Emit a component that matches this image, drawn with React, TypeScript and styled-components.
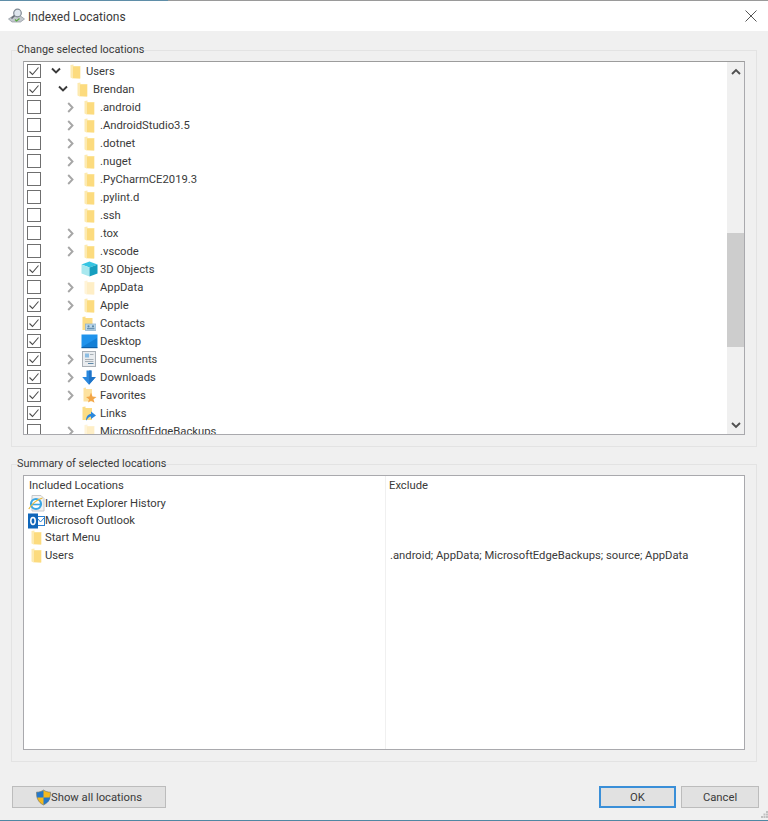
import React from "react";
import styled, { createGlobalStyle } from "styled-components";

const Global = createGlobalStyle`
  html, body { margin: 0; padding: 0; background: #f0f0f0; }
  * { box-sizing: border-box; }
`;

const Window = styled.div`
  position: relative;
  width: 768px; height: 821px; display: flex; flex-direction: column;
  background: #f0f0f0; color: #3a3a3a;
  font-family: Roboto, "Noto Sans", sans-serif; font-size: 11.25px;
  border-bottom: 1px solid #4f87a3; overflow: hidden;
`;
const TopEdge = styled.div`
  height: 1px; flex: none;
  background: linear-gradient(90deg, #5f8ea8 0 168px, #9a9a9a 168px);
`;
const TitleBar = styled.div`
  height: 30px; flex: none; background: #fff; display: flex; align-items: center;
  padding: 0 11px 0 8px; gap: 3px; font-size: 12px; color: #3a3a3a;
`;
const Title = styled.span`flex: 1; padding-top: 1px;`;
const Content = styled.div`
  flex: 1; display: flex; flex-direction: column; padding: 11px 11px 0 11px;
`;
const Group = styled.fieldset<{ $h: number }>`
  margin: 0; padding: 0 11px 11px 11px; height: ${p => p.$h}px; min-width: 0;
  border: 1px solid #e3e3e3; display: block;
`;
const Legend = styled.legend`
  margin-left: -6px; padding: 0; font-size: 10.85px; line-height: 16px; color: #3a3a3a;
`;
const TreeBox = styled.div`
  height: 374px; margin-top: 3px; border: 1px solid #a9a9ad; background: #fff;
  border-top-color: #9c9c9c; display: flex; overflow: hidden;
`;
const TreeList = styled.div`flex: 1; overflow: hidden; min-width: 0;`;
const Row = styled.div`
  height: 18px; display: flex; align-items: center; padding-left: 3px; white-space: nowrap;
`;
const Check = styled.span`
  width: 14px; height: 14px; flex: none; border: 1px solid #6f6f6f; background: #fff;
  display: flex; align-items: center; justify-content: center;
`;
const Indent = styled.span<{ $level: number }>`
  flex: none; width: ${p => p.$level * 7 + 8}px;
`;
const Caret = styled.span`
  flex: none; width: 14px; height: 14px; display: flex; align-items: center; justify-content: center;
`;
const IconSlot = styled.span`
  flex: none; width: 20px; height: 18px; display: flex; align-items: center; justify-content: center; margin-left: 2px;
`;
const RowLabel = styled.span`margin-left: 1px;`;
const Scrollbar = styled.div`
  width: 17px; flex: none; background: #f0f0f0; display: flex; flex-direction: column; align-items: stretch;
`;
const Arrow = styled.div`
  height: 17px; flex: none; display: flex; align-items: center; justify-content: center;
`;
const ArrowTop = styled(Arrow)`margin-top: 1px;`;
const Track = styled.div`flex: 1; padding-top: 153px;`;
const Thumb = styled.div`height: 114px; background: #cdcdcd;`;

const SummaryBox = styled.div`
  height: 275px; margin-top: 3px; border: 1px solid #a9a9ad; background: #fff;
  display: grid; grid-template-columns: 362px 1fr;
`;
const Column = styled.div`
  display: flex; flex-direction: column; min-width: 0;
  &:first-child { border-right: 1px solid #f0f0f0; }
`;
const ColHead = styled.div<{ $pad: number }>`
  height: 18.6px; padding-left: ${p => p.$pad}px; display: flex; align-items: center;
`;
const SumRow = styled.div`
  height: 17.3px; display: flex; align-items: center; white-space: nowrap;
`;
const SumIcon = styled.span`
  flex: none; width: 17px; height: 17px; margin-left: 4px; display: flex; align-items: center; justify-content: center;
`;
const ExcludeText = styled.span`padding-left: 4px;`;

const Spacer = styled.div`height: 9px; flex: none;`;
const Footer = styled.div`
  flex: 1; display: flex; align-items: flex-start; padding: 24px 0 0 1px; margin-right: -2px; gap: 5px;
`;
const Button = styled.button<{ $w: number; $primary?: boolean }>`
  width: ${p => p.$w}px; height: 22px; padding: 0; margin: 0; font: inherit; color: #3a3a3a;
  background: #e1e1e1; border: ${p => p.$primary ? "2px solid #3a8fd8" : "1px solid #bcbcbc"};
  display: flex; align-items: center; justify-content: center;
`;
const Push = styled.div`flex: 1;`;
const Grip = styled.svg`position: absolute; right: 0; bottom: 2px;`;

const Folder = ({ pale }: { pale?: boolean }) => (
  <svg width="11" height="15" viewBox="0 0 11 15">
    <path d="M0.5 1 L3.5 0.5 L3.5 2 L10.5 2 L10.5 14.5 L2.5 14.5 L0.5 13.5Z" fill={pale ? "#fff4d8" : "#fdeab0"} />
    <path d="M3 2.5 L10 2.5 L10 14.5 L3 14Z" fill={pale ? "#feeec6" : "#fcdb7e"} />
  </svg>
);
const Cube = () => (
  <svg width="17" height="16" viewBox="0 0 17 16">
    <path d="M8.5 0.5 L16.5 3.5 L8.5 6.5 L0.5 3.5Z" fill="#35c4e2" />
    <path d="M0.5 3.5 L8.5 6.5 L8.5 15.5 L0.5 12.5Z" fill="#a8e8ef" />
    <path d="M8.5 6.5 L16.5 3.5 L16.5 12.5 L8.5 15.5Z" fill="#159ebf" />
  </svg>
);
const Contacts = () => (
  <svg width="14" height="15" viewBox="0 0 14 15">
    <path d="M0.5 1 L3.5 0.5 L3.5 2 L10.5 2 L10.5 14 L0.5 14Z" fill="#fbdc84" />
    <rect x="3.5" y="8" width="10.5" height="6.5" fill="#bcd8ea" stroke="#8ab0cc" strokeWidth="0.7" />
    <circle cx="6.5" cy="10.3" r="1.1" fill="#5c87a8" />
    <circle cx="11" cy="10.3" r="1.1" fill="#5c87a8" />
    <rect x="5" y="11.8" width="7.5" height="1.5" fill="#6a94b4" />
  </svg>
);
const Desktop = () => (
  <svg width="17" height="15" viewBox="0 0 17 15">
    <rect x="0.5" y="0.5" width="16" height="13" fill="#1f93ec" />
    <path d="M1 13 L16 4 L16 13Z" fill="#137fd6" />
    <rect x="0.5" y="13" width="16" height="1.2" fill="#0b5ea8" />
  </svg>
);
const Doc = () => (
  <svg width="14" height="16" viewBox="0 0 14 16">
    <rect x="0.5" y="0.5" width="13" height="15" fill="#e9ecef" stroke="#aab0b6" />
    <rect x="3" y="2.5" width="4" height="4" fill="#8dbde2" />
    <rect x="8" y="3" width="3.5" height="1" fill="#a8b0b6" />
    <rect x="3" y="8" width="8.5" height="1" fill="#a8b0b6" />
    <rect x="3" y="10" width="8.5" height="1" fill="#a8b0b6" />
    <rect x="6" y="12" width="5.5" height="1" fill="#5c87a8" />
  </svg>
);
const Down = () => (
  <svg width="14" height="15" viewBox="0 0 14 15">
    <path d="M4.5 0.5 H9.5 V7 H13.8 L7 14.8 L0.2 7 H4.5Z" fill="#2a88de" />
    <path d="M7 0.5 H9.5 V7 H13.8 L7 14.8Z" fill="#1f74c8" />
  </svg>
);
const Favorites = () => (
  <svg width="15" height="16" viewBox="0 0 15 16">
    <path d="M1.5 1 L4 0.5 L4 2 L10 2 L10 14.5 L1.5 14.5Z" fill="#fde2a0" />
    <path d="M9 5.5 L10.5 9.5 L14.5 10 L11.5 12.3 L12.5 15.8 L9 13.8 L6 15.5 L7 12.3 L4 10 L7.5 9.5Z" fill="#f2a649" />
  </svg>
);
const Links = () => (
  <svg width="14" height="15" viewBox="0 0 14 15">
    <path d="M0.5 1 L3.5 0.5 L3.5 2 L10 2 L10 14 L0.5 14Z" fill="#fbdc84" />
    <path d="M4 14.8 C4 10.5 6.2 8 9 8 L9 5.5 L14 9.5 L9 13 L9 10.5 C7.5 10.5 5.8 12 4 14.8Z" fill="#2b88dc" />
  </svg>
);
const IE = () => (
  <svg width="17" height="17" viewBox="0 0 17 17">
    <path d="M4 0.5 H13 L16 3.5 V16 H4Z" fill="#f1f2f3" stroke="#c6c8cb" />
    <circle cx="8" cy="9" r="5" fill="#fff" stroke="#3aa6e4" strokeWidth="2.2" />
    <path d="M3.5 9.5 H13" stroke="#3aa6e4" strokeWidth="1.6" />
    <path d="M0.8 14 C3 10 9 4 14.5 3" fill="none" stroke="#e6b93a" strokeWidth="1.2" />
  </svg>
);
const Outlook = () => (
  <svg width="17" height="16" viewBox="0 0 17 16">
    <rect x="8.5" y="3.5" width="8" height="9" fill="#fff" stroke="#2a7fd0" strokeWidth="1" />
    <path d="M9.5 5.5 L12.5 9 L16 5" fill="none" stroke="#2a7fd0" strokeWidth="1" />
    <rect x="0" y="0.5" width="10" height="15" fill="#0f66ba" />
    <ellipse cx="5" cy="8" rx="2.2" ry="3.4" fill="none" stroke="#fff" strokeWidth="1.5" />
  </svg>
);
const Shield = () => (
  <svg width="15" height="17" viewBox="0 0 16 17">
    <path d="M8 0.5 C10 2 12.5 2.8 15.5 2.8 C15.5 9 14 13.5 8 16.5 C2 13.5 0.5 9 0.5 2.8 C3.5 2.8 6 2 8 0.5Z" fill="#f4b91e" stroke="#5e6d80" strokeWidth="0.6" />
    <path d="M8 1 V8.5 H1 C0.8 7 0.8 5 0.8 3 C3.5 3 6 2.2 8 1Z" fill="#2577c9" />
    <path d="M8 8.5 H15 C14.6 11.8 12.5 14.5 8 16.2Z" fill="#2577c9" />
  </svg>
);
const Indexed = () => (
  <svg width="17" height="16" viewBox="0 0 17 16">
    <path d="M0.5 11 L5 8 H12.5 L16.5 11 L12.5 14 H4Z" fill="#c3c8ce" stroke="#8d949c" strokeWidth="0.7" />
    <circle cx="9.5" cy="5" r="3.8" fill="#dfe6ee" stroke="#808a94" strokeWidth="1.2" />
    <path d="M6.5 7.5 L3.5 10.5" stroke="#646b73" strokeWidth="1.6" />
    <path d="M7 11.5 L8.5 13 L11.5 10.5" fill="none" stroke="#5aa845" strokeWidth="1.2" />
  </svg>
);
const CheckMark = () => (
  <svg width="12" height="12" viewBox="0 0 12 12">
    <path d="M1.5 6.5 L4.5 9.5 L10.5 2.5" fill="none" stroke="#4a4a4a" strokeWidth="1.1" />
  </svg>
);
const Chevron = ({ open }: { open?: boolean }) =>
  open ? (
    <svg width="10" height="8" viewBox="0 0 10 8">
      <path d="M1 1.5 L5 5.5 L9 1.5" fill="none" stroke="#3a3a3a" strokeWidth="1.9" />
    </svg>
  ) : (
    <svg width="7" height="11" viewBox="0 0 7 11">
      <path d="M1.2 1 L5.5 5.5 L1.2 10" fill="none" stroke="#a6a6a6" strokeWidth="1.9" />
    </svg>
  );
const ScrollChevron = ({ up }: { up?: boolean }) => (
  <svg width="10" height="7" viewBox="0 0 10 7">
    <path d={up ? "M1 6 L5 2 L9 6" : "M1 1 L5 5 L9 1"} fill="none" stroke="#505050" strokeWidth="1.9" />
  </svg>
);

type Node = { label: string; level: number; on: boolean; caret?: "open" | "closed"; icon?: React.ReactNode };
const nodes: Node[] = [
  { label: "Users", level: 0, on: true, caret: "open" },
  { label: "Brendan", level: 1, on: true, caret: "open" },
  { label: ".android", level: 2, on: false, caret: "closed" },
  { label: ".AndroidStudio3.5", level: 2, on: false, caret: "closed" },
  { label: ".dotnet", level: 2, on: false, caret: "closed" },
  { label: ".nuget", level: 2, on: false, caret: "closed" },
  { label: ".PyCharmCE2019.3", level: 2, on: false, caret: "closed" },
  { label: ".pylint.d", level: 2, on: false },
  { label: ".ssh", level: 2, on: false },
  { label: ".tox", level: 2, on: false, caret: "closed" },
  { label: ".vscode", level: 2, on: false, caret: "closed" },
  { label: "3D Objects", level: 2, on: true, icon: <Cube /> },
  { label: "AppData", level: 2, on: false, caret: "closed", icon: <Folder pale /> },
  { label: "Apple", level: 2, on: true, caret: "closed" },
  { label: "Contacts", level: 2, on: true, icon: <Contacts /> },
  { label: "Desktop", level: 2, on: true, icon: <Desktop /> },
  { label: "Documents", level: 2, on: true, caret: "closed", icon: <Doc /> },
  { label: "Downloads", level: 2, on: true, caret: "closed", icon: <Down /> },
  { label: "Favorites", level: 2, on: true, caret: "closed", icon: <Favorites /> },
  { label: "Links", level: 2, on: true, icon: <Links /> },
  { label: "MicrosoftEdgeBackups", level: 2, on: false, caret: "closed", icon: <Folder pale /> },
];

const included: { label: string; icon: React.ReactNode }[] = [
  { label: "Internet Explorer History", icon: <IE /> },
  { label: "Microsoft Outlook", icon: <Outlook /> },
  { label: "Start Menu", icon: <Folder /> },
  { label: "Users", icon: <Folder /> },
];

export default function App() {
  return (
    <Window>
      <Global />
      <TopEdge />
      <TitleBar>
        <Indexed />
        <Title>Indexed Locations</Title>
        <svg width="12" height="12" viewBox="0 0 12 12">
          <path d="M0.5 0.5 L11.5 11.5 M11.5 0.5 L0.5 11.5" stroke="#555" strokeWidth="1" />
        </svg>
      </TitleBar>
      <Content>
        <Group $h={405}>
          <Legend>Change selected locations</Legend>
          <TreeBox>
            <TreeList>
              {nodes.map(n => (
                <Row key={n.label}>
                  <Check>{n.on && <CheckMark />}</Check>
                  <Indent $level={n.level} />
                  <Caret>{n.caret && <Chevron open={n.caret === "open"} />}</Caret>
                  <IconSlot>{n.icon ?? <Folder />}</IconSlot>
                  <RowLabel>{n.label}</RowLabel>
                </Row>
              ))}
            </TreeList>
            <Scrollbar>
              <ArrowTop><ScrollChevron up /></ArrowTop>
              <Track><Thumb /></Track>
              <Arrow><ScrollChevron /></Arrow>
            </Scrollbar>
          </TreeBox>
        </Group>
        <Spacer />
        <Group $h={306}>
          <Legend>Summary of selected locations</Legend>
          <SummaryBox>
            <Column>
              <ColHead $pad={5}>Included Locations</ColHead>
              {included.map(i => (
                <SumRow key={i.label}>
                  <SumIcon>{i.icon}</SumIcon>
                  {i.label}
                </SumRow>
              ))}
            </Column>
            <Column>
              <ColHead $pad={3}>Exclude</ColHead>
              <SumRow />
              <SumRow />
              <SumRow />
              <SumRow>
                <ExcludeText>.android; AppData; MicrosoftEdgeBackups; source; AppData</ExcludeText>
              </SumRow>
            </Column>
          </SummaryBox>
        </Group>
        <Footer>
          <Button $w={154}><Shield />Show all locations</Button>
          <Push />
          <Button $w={77} $primary>OK</Button>
          <Button $w={78}>Cancel</Button>
        </Footer>
      </Content>
      <Grip width="7" height="7" viewBox="0 0 7 7">
        <path d="M5 0h2v2H5zM2.5 2.5h2v2h-2zM5 2.5h2v2H5zM0 5h2v2H0zM2.5 5h2v2h-2zM5 5h2v2H5z" fill="#c0c0c0" />
      </Grip>
    </Window>
  );
}
